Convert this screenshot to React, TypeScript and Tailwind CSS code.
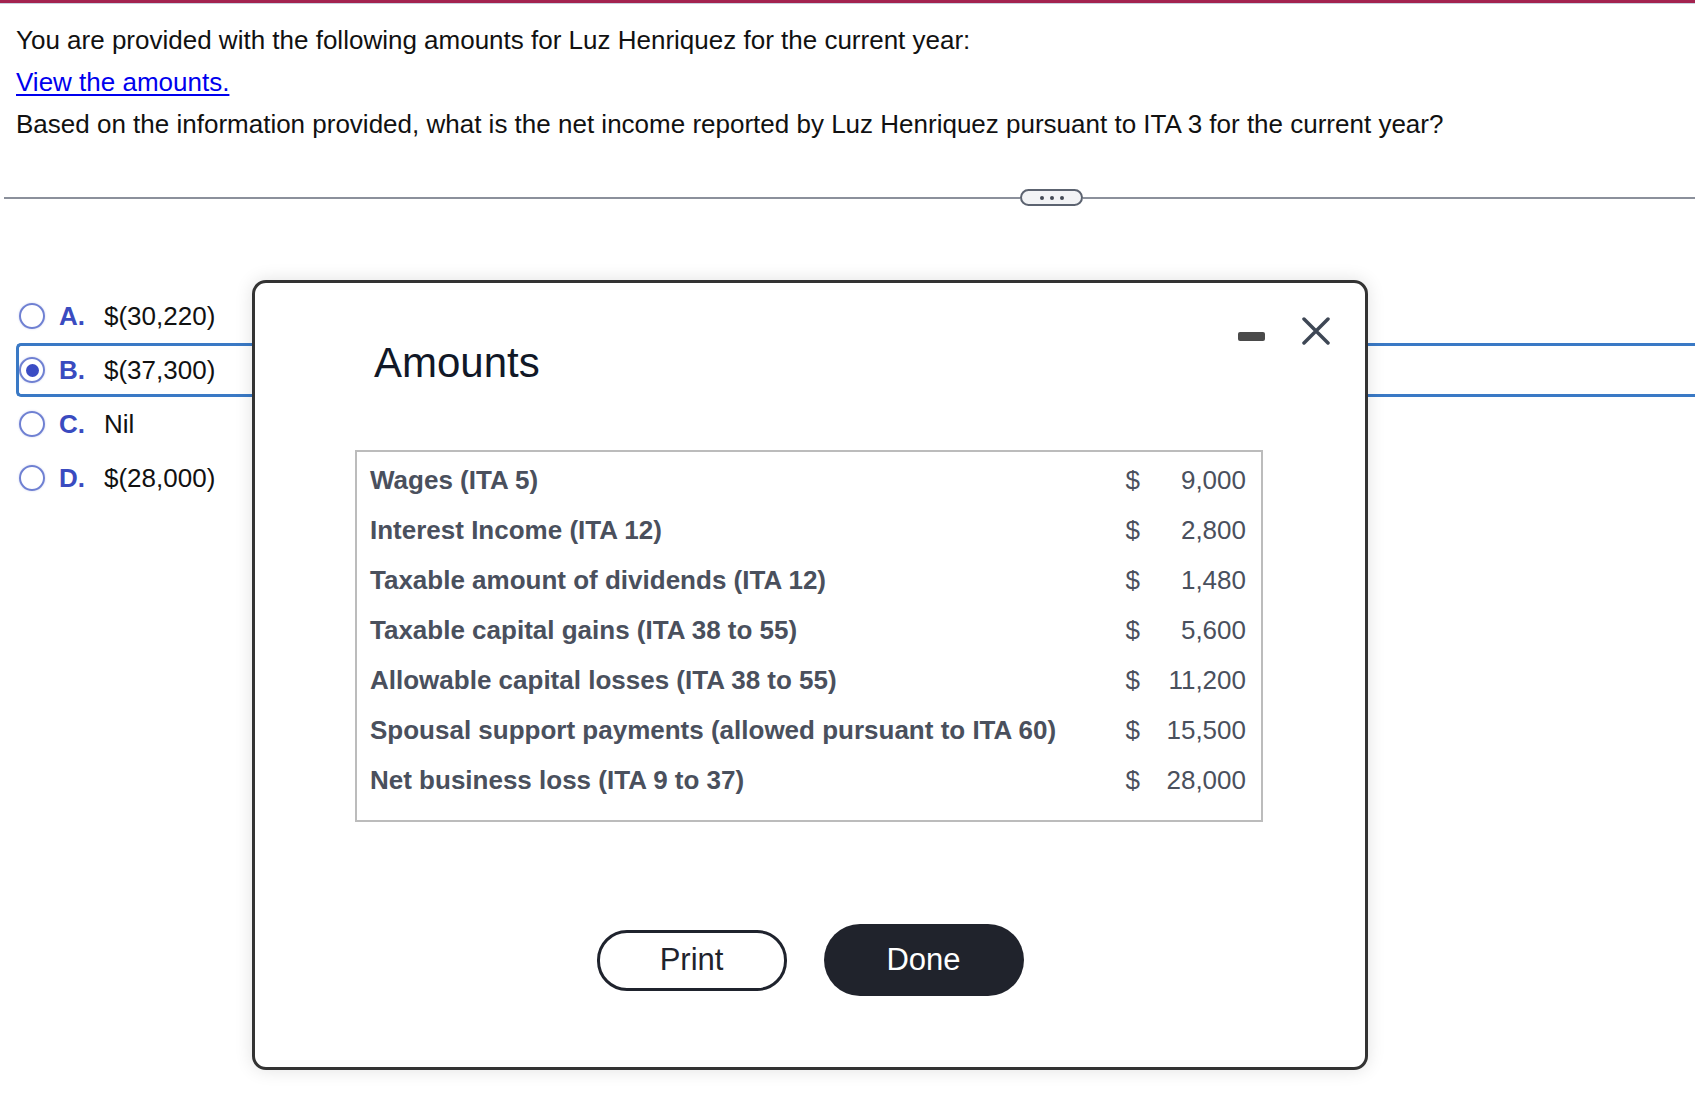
import React from "react";

const rows: [string, string][] = [
  ["Wages (ITA 5)", "9,000"],
  ["Interest Income (ITA 12)", "2,800"],
  ["Taxable amount of dividends (ITA 12)", "1,480"],
  ["Taxable capital gains (ITA 38 to 55)", "5,600"],
  ["Allowable capital losses (ITA 38 to 55)", "11,200"],
  ["Spousal support payments (allowed pursuant to ITA 60)", "15,500"],
  ["Net business loss (ITA 9 to 37)", "28,000"],
];

const options = [
  { l: "A.", v: "$(30,220)", sel: false },
  { l: "B.", v: "$(37,300)", sel: true },
  { l: "C.", v: "Nil", sel: false },
  { l: "D.", v: "$(28,000)", sel: false },
];

export default function App() {
  return (
    <div
      className="relative w-full min-h-screen bg-white overflow-hidden"
      style={{ fontFamily: '"Liberation Sans", Arial, Helvetica, sans-serif' }}
    >
      <div className="h-[3px] bg-[#a3234f]" />
      <div className="h-[1px] bg-[#c9d3e1]" />

      <div className="pt-[15px] pl-[16px] text-[26px] leading-[42px] text-[#111]">
        <div>You are provided with the following amounts for Luz Henriquez for the current year:</div>
        <div>
          <a href="#" className="text-[#0000ee] underline underline-offset-[3px]">
            View the amounts.
          </a>
        </div>
        <div>
          Based on the information provided, what is the net income reported by Luz Henriquez pursuant to ITA 3 for
          the current year?
        </div>
      </div>

      <div className="mt-[44px] ml-[4px] flex items-center h-[17px]">
        <div className="w-[1016px] h-[2px] bg-[#8b909b]" />
        <div className="w-[63px] h-[17px] rounded-full border-2 border-[#5c6370] bg-[#f2f3f5] flex items-center justify-center gap-[6px]">
          <span className="w-[4px] h-[4px] rounded-full bg-[#444a55]" />
          <span className="w-[4px] h-[4px] rounded-full bg-[#444a55]" />
          <span className="w-[4px] h-[4px] rounded-full bg-[#444a55]" />
        </div>
        <div className="flex-1 h-[2px] bg-[#8b909b]" />
      </div>

      <div className="mt-[83px] pl-[16px] flex flex-col">
        {options.map((o) => (
          <div
            key={o.l}
            className={`h-[54px] flex items-center border-[3px] rounded-l-[5px] ${
              o.sel ? "border-[#3a79c5] border-r-0" : "border-transparent"
            }`}
          >
            <div className="w-[26px] h-[26px] rounded-full border-2 border-[#6f80d2] flex items-center justify-center shadow-[0_0_2px_rgba(90,110,210,0.35)]">
              {o.sel && <div className="w-[13px] h-[13px] rounded-full bg-[#3b4cc4]" />}
            </div>
            <span className="ml-[14px] w-[45px] text-[26px] font-bold text-[#3a4bc0]">{o.l}</span>
            <span className="text-[26px] text-[#111]">{o.v}</span>
          </div>
        ))}
      </div>

      <div className="absolute left-[252px] top-[280px] w-[1116px] h-[790px] border-[3px] border-[#333333] rounded-[14px] bg-white shadow-[0_0_18px_rgba(0,0,0,0.12)] flex flex-col">
        <div className="flex justify-between pl-[119px] pr-[35px] pt-[34px]">
          <div className="mt-[21px] text-[42px] leading-[50px] text-[#111827]">Amounts</div>
          <div className="flex items-start gap-[37px]">
            <div className="mt-[15px] w-[27px] h-[9px] rounded-[2px] bg-[#4a4a4a]" />
            <svg width="28" height="28" viewBox="0 0 28 28">
              <path d="M2 2 L26 26 M26 2 L2 26" stroke="#3e4755" strokeWidth="3.5" strokeLinecap="round" />
            </svg>
          </div>
        </div>

        <div className="mt-[62px] ml-[100px] w-[908px] h-[372px] border-2 border-[#bcbcbc] pt-[3px] pl-[13px] pr-[15px]">
          {rows.map(([label, amt]) => (
            <div key={label} className="h-[50px] flex items-center text-[26px]">
              <span className="flex-1 font-bold text-[#4a505d]">{label}</span>
              <span className="text-[#4a505d]">$</span>
              <span className="w-[106px] text-right text-[#4a505d]">{amt}</span>
            </div>
          ))}
        </div>

        <div className="mt-[102px] flex items-center justify-center gap-[37px]">
          <button className="w-[190px] h-[61px] rounded-[30px] border-[3px] border-[#1f232d] bg-white text-[31px] text-[#1f232d]">
            Print
          </button>
          <button className="w-[200px] h-[72px] rounded-[36px] bg-[#20232c] text-[31px] text-white">Done</button>
        </div>
      </div>
    </div>
  );
}
